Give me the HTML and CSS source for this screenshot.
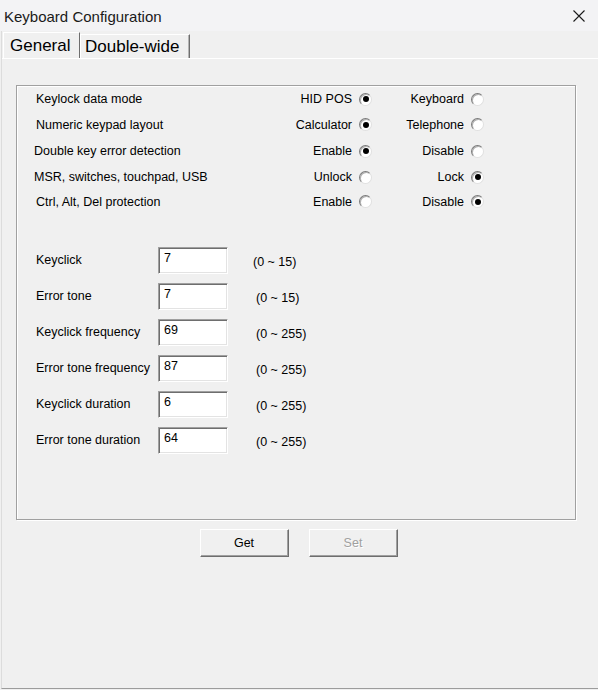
FILE: index.html
```html
<!DOCTYPE html>
<html lang="en">
<head>
<meta charset="utf-8">
<title>Keyboard Configuration</title>
<link rel="stylesheet" href="styles.css">
</head>
<body>
<div class="window">
  <div class="titlebar">
    <span class="title">Keyboard Configuration</span>
    <svg class="close" width="12" height="12" viewBox="0 0 12 12"><path d="M0.5 0.5 L11.5 11.5 M11.5 0.5 L0.5 11.5" stroke="#1a1a1a" stroke-width="1.1" fill="none"/></svg>
  </div>
  <div class="content">
    <div class="tabs">
      <div class="tab tab-active">General</div>
      <div class="tab tab-second">Double-wide</div>
    </div>
    <div class="group">
      <div class="radios">
        <div class="rlabel">Keylock data mode</div>
        <div class="opt">HID POS <span class="radio on"></span></div>
        <div class="opt">Keyboard <span class="radio"></span></div>

        <div class="rlabel">Numeric keypad layout</div>
        <div class="opt">Calculator <span class="radio on"></span></div>
        <div class="opt">Telephone <span class="radio"></span></div>

        <div class="rlabel shift">Double key error detection</div>
        <div class="opt">Enable <span class="radio on"></span></div>
        <div class="opt">Disable <span class="radio"></span></div>

        <div class="rlabel shift">MSR, switches, touchpad, USB</div>
        <div class="opt">Unlock <span class="radio"></span></div>
        <div class="opt">Lock <span class="radio on"></span></div>

        <div class="rlabel">Ctrl, Alt, Del protection</div>
        <div class="opt">Enable <span class="radio"></span></div>
        <div class="opt">Disable <span class="radio on"></span></div>
      </div>
      <div class="fields">
        <div class="field"><span class="flabel">Keyclick</span><span class="input">7</span><span class="range first">(0 ~ 15)</span></div>
        <div class="field"><span class="flabel">Error tone</span><span class="input">7</span><span class="range">(0 ~ 15)</span></div>
        <div class="field"><span class="flabel">Keyclick frequency</span><span class="input">69</span><span class="range">(0 ~ 255)</span></div>
        <div class="field"><span class="flabel">Error tone frequency</span><span class="input">87</span><span class="range">(0 ~ 255)</span></div>
        <div class="field"><span class="flabel">Keyclick duration</span><span class="input">6</span><span class="range">(0 ~ 255)</span></div>
        <div class="field"><span class="flabel">Error tone duration</span><span class="input">64</span><span class="range">(0 ~ 255)</span></div>
      </div>
    </div>
    <div class="buttons">
      <div class="btn">Get</div>
      <div class="btn disabled">Set</div>
    </div>
  </div>
</div>
</body>
</html>
```
FILE: styles.css
```css
html, body {
  margin: 0;
  padding: 0;
  background: #f0f0f0;
}
body {
  width: 598px;
  height: 690px;
  overflow: hidden;
  font-family: "Liberation Sans", Arial, sans-serif;
  font-size: 12.5px;
  color: #000;
}
.window {
  width: 598px;
  height: 690px;
  display: flex;
  flex-direction: column;
}
.titlebar {
  height: 31px;
  flex: none;
  background: #f3f3f5;
  display: flex;
  align-items: center;
  justify-content: space-between;
  padding: 0 13px 0 4px;
  box-sizing: border-box;
}
.title {
  font-size: 15px;
  color: #1a1a1a;
  margin-top: 1px;
}
.close {
  display: block;
}
.content {
  height: 657px;
  margin-left: 1px;
  border-left: 1px solid #dcdcdc;
  border-bottom: 1px solid #9c9c9c;
  box-sizing: content-box;
}
.tabs {
  height: 27px;
  display: flex;
  align-items: flex-end;
  padding-left: 1px;
  border-bottom: 1px solid #ffffff;
}
.tab {
  font-size: 17px;
  line-height: 20px;
  display: flex;
  align-items: center;
  box-sizing: border-box;
  border-left: 1px solid #ffffff;
  border-top: 1px solid #ffffff;
  border-right: 1px solid #6e6e6e;
  background: #f0f0f0;
  color: #000;
}
.tab-active {
  width: 77px;
  height: 26px;
  padding-left: 6px;
}
.tab-second {
  width: 110px;
  height: 24px;
  padding-left: 4px;
  box-shadow: inset -1px 0 0 #b4b4b4;
}
.group {
  margin: 26px 0 0 14px;
  width: 560px;
  height: 435px;
  box-sizing: border-box;
  border: 1px solid #a0a0a0;
  box-shadow: 1px 1px 0 #ffffff, inset 1px 1px 0 #ffffff;
}
.radios {
  display: grid;
  grid-template-columns: 249px 88px 112px;
  grid-template-rows: 24px 27px 26px 26px 23px;
  padding: 1px 0 0 19px;
}
.rlabel {
  display: flex;
  align-items: center;
}
.rlabel.shift {
  margin-left: -2px;
}
.opt {
  display: flex;
  align-items: center;
  justify-content: flex-end;
  gap: 7px;
  padding-right: 1px;
}
.radio {
  width: 13px;
  height: 13px;
  box-sizing: border-box;
  border-radius: 50%;
  border: 1px solid;
  border-color: #7a7a7a #e0e0e0 #e0e0e0 #7a7a7a;
  background: #ffffff;
  box-shadow: inset 1px 1px 0 #b0b0b0;
  display: flex;
  align-items: center;
  justify-content: center;
}
.radio.on::after {
  content: "";
  width: 6px;
  height: 6px;
  border-radius: 50%;
  background: #000;
}
.fields {
  margin-top: 34px;
  padding-left: 19px;
  display: flex;
  flex-direction: column;
  gap: 9px;
}
.field {
  display: flex;
  align-items: center;
  height: 27px;
}
.flabel {
  width: 122px;
  flex: none;
  margin-top: -1px;
}
.input {
  width: 70px;
  height: 27px;
  box-sizing: border-box;
  background: #ffffff;
  border: 1px solid;
  border-color: #a0a0a0 #ffffff #ffffff #a0a0a0;
  box-shadow: inset 1px 1px 0 #6e6e6e, inset -1px -1px 0 #e3e3e3;
  padding: 2px 0 0 5px;
  line-height: 16px;
}
.range {
  margin-left: 28px;
  margin-top: 2px;
}
.range.first {
  margin-left: 25px;
}
.buttons {
  display: flex;
  justify-content: center;
  gap: 20px;
  margin-top: 9px;
  padding-right: 3px;
}
.btn {
  width: 89px;
  height: 28px;
  box-sizing: border-box;
  border: 1px solid;
  border-color: #ffffff #6e6e6e #6e6e6e #ffffff;
  box-shadow: inset -1px -1px 0 #a0a0a0;
  background: #f0f0f0;
  display: flex;
  align-items: center;
  justify-content: center;
}
.btn.disabled {
  color: #a0a0a0;
  text-shadow: 1px 1px 0 #ffffff;
}
```
